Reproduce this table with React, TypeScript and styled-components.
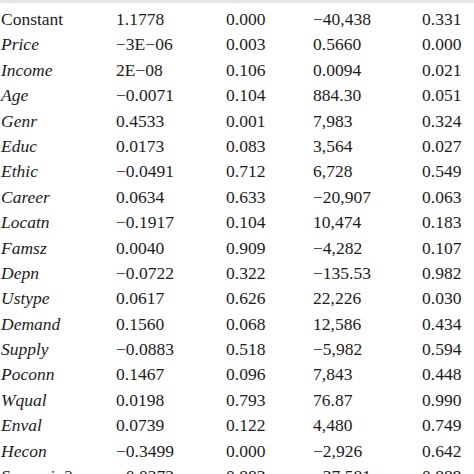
import styled, { createGlobalStyle } from 'styled-components'

const GlobalStyle = createGlobalStyle`
  html, body {
    margin: 0;
    padding: 0;
    background: #ffffff;
  }
`

const Page = styled.div`
  width: 474px;
  height: 474px;
  overflow: hidden;
  background: #ffffff;
  font-family: 'Liberation Serif', 'Times New Roman', serif;
  font-size: 17.5px;
  color: #1c1c1c;
`

const TopRule = styled.div`
  height: 3px;
  background: #e6e6e6;
`

const Table = styled.div`
  display: grid;
  grid-template-columns: 115px 110px 87px 109px 1fr;
  grid-auto-rows: 25.4px;
  padding-top: 4px;
  padding-left: 1px;
  line-height: 25.4px;
`

const Cell = styled.div<{ italic?: boolean }>`
  white-space: nowrap;
  font-style: ${({ italic }) => (italic ? 'italic' : 'normal')};
`

const rows: string[][] = [
  ['Constant', '1.1778', '0.000', '\u221240,438', '0.331'],
  ['Price', '\u22123E\u221206', '0.003', '0.5660', '0.000'],
  ['Income', '2E\u221208', '0.106', '0.0094', '0.021'],
  ['Age', '\u22120.0071', '0.104', '884.30', '0.051'],
  ['Genr', '0.4533', '0.001', '7,983', '0.324'],
  ['Educ', '0.0173', '0.083', '3,564', '0.027'],
  ['Ethic', '\u22120.0491', '0.712', '6,728', '0.549'],
  ['Career', '0.0634', '0.633', '\u221220,907', '0.063'],
  ['Locatn', '\u22120.1917', '0.104', '10,474', '0.183'],
  ['Famsz', '0.0040', '0.909', '\u22124,282', '0.107'],
  ['Depn', '\u22120.0722', '0.322', '\u2212135.53', '0.982'],
  ['Ustype', '0.0617', '0.626', '22,226', '0.030'],
  ['Demand', '0.1560', '0.068', '12,586', '0.434'],
  ['Supply', '\u22120.0883', '0.518', '\u22125,982', '0.594'],
  ['Poconn', '0.1467', '0.096', '7,843', '0.448'],
  ['Wqual', '0.0198', '0.793', '76.87', '0.990'],
  ['Enval', '0.0739', '0.122', '4,480', '0.749'],
  ['Hecon', '\u22120.3499', '0.000', '\u22122,926', '0.642'],
  ['Scenario2', '\u22120.0272', '0.883', '\u221237,581', '0.889']
]

export default function App() {
  return (
    <Page>
      <GlobalStyle />
      <TopRule />
      <Table>
        {rows.map((row, idx) =>
          row.map((data, col) => (
            <Cell key={idx + '-' + col} italic={col === 0 && idx > 0}>
              {data}
            </Cell>
          ))
        )}
      </Table>
    </Page>
  )
}
